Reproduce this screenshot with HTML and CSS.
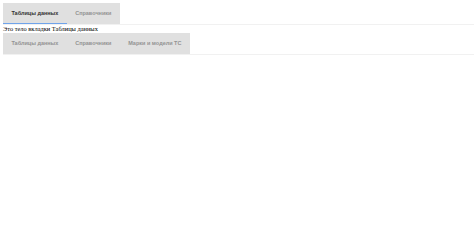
FILE: index.html
```html
<!DOCTYPE html>
<html>
<head>
<meta charset="utf-8">
<link rel="stylesheet" href="styles.css">
</head>
<body>
<div class="tabs">
  <div class="tabbar">
    <div class="tab active">Таблицы данных</div>
    <div class="tab">Справочники</div>
  </div>
</div>
<div class="body-text">Это тело вкладки Таблицы данных</div>
<div class="tabs">
  <div class="tabbar">
    <div class="tab">Таблицы данных</div>
    <div class="tab">Справочники</div>
    <div class="tab">Марки и модели ТС</div>
  </div>
</div>
</body>
</html>
```
FILE: styles.css
```css
html, body {
  margin: 0;
  padding: 0;
  background: #ffffff;
}
body {
  padding: 3px 0 0 3px;
}
.tabs {
  border-bottom: 1px solid #f1f1f1;
}
.tabbar {
  display: flex;
  width: fit-content;
  background: #e0e0e0;
}
.tab {
  font-family: "Liberation Sans", Arial, sans-serif;
  font-size: 5.5px;
  font-weight: bold;
  color: #939393;
  height: 21px;
  line-height: 21px;
  padding: 0 8.4px;
  box-sizing: border-box;
  white-space: nowrap;
}
.tab.active {
  color: #333333;
  border-bottom: 1px solid #6fa3ea;
}
.body-text {
  font-family: "Liberation Serif", "Times New Roman", serif;
  font-size: 6.4px;
  line-height: 8px;
  color: #000;
}
```
